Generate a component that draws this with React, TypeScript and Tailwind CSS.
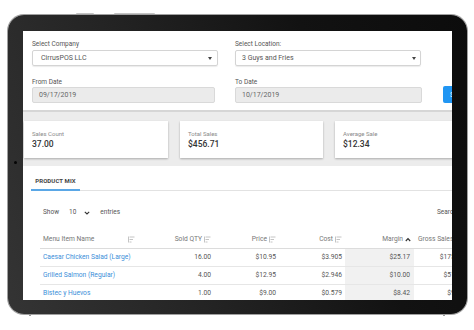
import React from "react";

const SortIcon = () => (
  <svg width="7" height="7" viewBox="0 0 7 7" className="shrink-0">
    <path d="M0.5 0.5 V6.5" stroke="#b5b5b5" strokeWidth="0.8" />
    <path d="M1.5 1 H6.5 M1.5 3.5 H5 M1.5 6 H3.5" stroke="#b5b5b5" strokeWidth="0.8" />
  </svg>
);

const UpIcon = () => (
  <svg width="6" height="5" viewBox="0 0 6 5" className="shrink-0">
    <path d="M0.8 4 L3 1.6 L5.2 4" fill="none" stroke="#333" strokeWidth="1.2" />
  </svg>
);

const Caret = () => (
  <svg width="4" height="3" viewBox="0 0 4 3">
    <path d="M0 0 H4 L2 3 Z" fill="#444" />
  </svg>
);

const cols = "grid grid-cols-[100px_74px_65px_66px_69px_56px]";

const rows = [
  ["Caesar Chicken Salad (Large)", "16.00", "$10.95", "$3.905", "$25.17", "$175.20"],
  ["Grilled Salmon (Regular)", "4.00", "$12.95", "$2.946", "$10.00", "$51.80"],
  ["Bistec y Huevos", "1.00", "$9.00", "$0.579", "$8.42", "$9.00"],
];

function HeaderCell({ label, right, icon }: { label: string; right?: boolean; icon: React.ReactNode }) {
  return (
    <div className={`flex items-center ${right ? "justify-end gap-[2px] pr-[3px]" : "justify-between pl-[3px] pr-[5px]"}`}>
      <span>{label}</span>
      {icon}
    </div>
  );
}

export default function App() {
  return (
    <div className="w-[474px] h-[330px] bg-white overflow-hidden relative" style={{ fontFamily: "Roboto, 'Liberation Sans', sans-serif" }}>
      {/* side buttons */}
      <div className="absolute left-[76px] top-[13px] w-[18px] h-[2px] bg-[#c4c4c4] rounded-t-[1px]" />
      <div className="absolute left-[114px] top-[13px] w-[41px] h-[2px] bg-[#c4c4c4] rounded-t-[1px]" />
      <div className="absolute left-[29px] top-[14px] w-[2px] h-[2px] bg-[#9a9a9a]" />
      <div className="absolute left-[443px] top-[14px] w-[2px] h-[2px] bg-[#9a9a9a]" />
      <div className="absolute left-[29px] top-[314px] w-[2px] h-[2px] bg-[#9a9a9a]" />
      <div className="absolute left-[443px] top-[314px] w-[2px] h-[2px] bg-[#9a9a9a]" />

      <div className="pt-[15px] pl-[8px]">
        <div className="relative w-[459px] h-[299px] rounded-[16px] pt-[16px] pl-[15px] pr-[15px] pb-[14px] bg-[linear-gradient(70deg,#343434_0%,#242424_35%,#121212_70%,#0c0c0c_100%)] shadow-[0_0_0_1px_#a0a0a0]">
          {/* camera */}
          <div className="absolute left-[6px] top-[146px] w-[3px] h-[3px] rounded-full bg-[#050505]" />

          <div className="w-[429px] h-[269px] overflow-hidden bg-white flex flex-col">
            {/* filters */}
            <div className="bg-white pt-[9px] pl-[9px] pb-[7px] border-b-[2px] border-[#d6d6d6] shrink-0">
              <div className="flex w-[480px] text-[6.5px] leading-[8px] text-[#555]">
                <div className="w-[186px] shrink-0 flex flex-col">
                  <div>Select Company</div>
                  <div className="mt-[2px] h-[16px] border border-[#d4d4d4] rounded-[2px] shadow-[0_1px_1px_rgba(0,0,0,0.08)] flex items-center justify-between pl-[8px] pr-[5px] text-[7px] text-[#555]">
                    <span>CirrusPOS LLC</span>
                    <Caret />
                  </div>
                  <div className="mt-[12px]">From Date</div>
                  <div className="mt-[1px] w-[183px] h-[16px] border border-[#d9d9d9] bg-[#ebebeb] rounded-[2px] flex items-center pl-[6px] text-[7px] text-[#666]">
                    09/17/2019
                  </div>
                </div>
                <div className="w-[186px] shrink-0 ml-[17px] flex flex-col">
                  <div>Select Location:</div>
                  <div className="mt-[2px] h-[16px] border border-[#d4d4d4] rounded-[2px] shadow-[0_1px_1px_rgba(0,0,0,0.08)] flex items-center justify-between pl-[6px] pr-[4px] text-[7px] text-[#555]">
                    <span>3 Guys and Fries</span>
                    <Caret />
                  </div>
                  <div className="mt-[12px]">To Date</div>
                  <div className="mt-[1px] w-[187px] h-[16px] border border-[#d9d9d9] bg-[#ebebeb] rounded-[2px] flex items-center pl-[6px] text-[7px] text-[#666]">
                    10/17/2019
                  </div>
                </div>
                <div className="ml-[22px] flex flex-col justify-end">
                  <div className="h-[17px] w-[40px] bg-[#2196f3] rounded-[2px] flex items-center pl-[7px] text-white text-[7px]">
                    Search
                  </div>
                </div>
              </div>
            </div>

            {/* cards */}
            <div className="bg-[#ececec] pt-[9px] pb-[8px] pl-[1px] shrink-0">
              <div className="flex gap-[12px] w-[480px]">
                {[
                  ["Sales Count", "37.00", "w-[144px]"],
                  ["Total Sales", "$456.71", "w-[143px]"],
                  ["Average Sale", "$12.34", "w-[143px]"],
                ].map(([l, v, w]) => (
                  <div key={l} className={`${w} h-[37px] shrink-0 bg-white shadow-[0_1px_2px_rgba(0,0,0,0.28)] pt-[9px] pl-[8px]`}>
                    <div className="text-[6px] leading-[8px] text-[#8a8a8a]">{l}</div>
                    <div className="mt-[1px] text-[8.5px] leading-[11px] font-medium text-[#333]">{v}</div>
                  </div>
                ))}
              </div>
            </div>

            {/* product mix */}
            <div className="bg-white pl-[8px] pt-[5px] flex-1">
              <div className="flex border-b border-[#e2e2e2] w-[440px]">
                <div className="w-[49px] h-[20px] -mb-px border-b-[2px] border-[#5aa7e6] flex items-center justify-center text-[6px] font-bold text-[#444] tracking-[0.1px]">
                  PRODUCT MIX
                </div>
              </div>

              <div className="ml-[9px] w-[440px]">
                <div className="mt-[15px] h-[14px] flex items-center text-[6.5px] text-[#555]">
                  <div className="w-[397px] flex items-center">
                    <span className="ml-[3px]">Show</span>
                    <span className="ml-[10px]">10</span>
                    <svg width="6" height="4" viewBox="0 0 6 4" className="ml-[8px]">
                      <path d="M0.8 0.8 L3 3 L5.2 0.8" fill="none" stroke="#333" strokeWidth="1.1" />
                    </svg>
                    <span className="ml-[10px]">entries</span>
                  </div>
                  <span>Search:</span>
                </div>

                <div className="mt-[11px] text-[6.7px]">
                  <div className={`${cols} h-[18px] border-b border-[#dcdcdc] text-[#777]`}>
                    <HeaderCell label="Menu Item Name" icon={<SortIcon />} />
                    <HeaderCell label="Sold QTY" right icon={<SortIcon />} />
                    <HeaderCell label="Price" right icon={<SortIcon />} />
                    <HeaderCell label="Cost" right icon={<SortIcon />} />
                    <HeaderCell label="Margin" right icon={<UpIcon />} />
                    <div className="flex items-center pl-[4px] gap-[2px] whitespace-nowrap">
                      <span>Gross Sales</span>
                      <SortIcon />
                    </div>
                  </div>
                  {rows.map((r) => (
                    <div key={r[0]} className={`${cols} h-[18px] border-b border-[#e6e6e6] text-[#555]`}>
                      <div className="flex items-center pl-[3px] text-[#3d8fd9] whitespace-nowrap">{r[0]}</div>
                      <div className="flex items-center justify-end pr-[3px]">{r[1]}</div>
                      <div className="flex items-center justify-end pr-[3px]">{r[2]}</div>
                      <div className="flex items-center justify-end pr-[3px]">{r[3]}</div>
                      <div className="flex items-center justify-end pr-[4px] bg-[#f1f1f1]">{r[4]}</div>
                      <div className="flex items-center justify-end pr-[6px]">{r[5]}</div>
                    </div>
                  ))}
                </div>
              </div>
            </div>
          </div>
        </div>
      </div>
    </div>
  );
}
